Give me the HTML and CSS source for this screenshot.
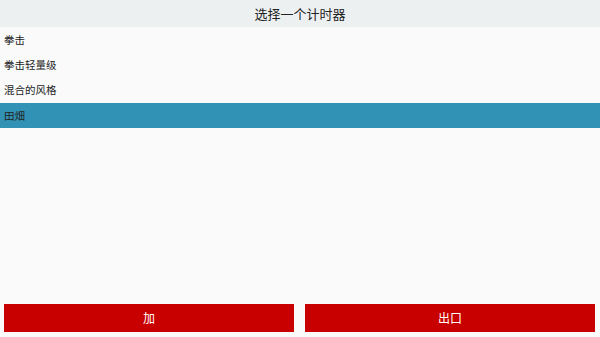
FILE: index.html
```html
<!DOCTYPE html>
<html>
<head lang="zh">
    <meta charset="UTF-8">
    <title>选择一个计时器</title>
    <link rel="stylesheet" href="styles.css">
</head>
<body>
<div class="page">
    <div class="header">选择一个计时器</div>
    <ul class="list">
        <li>拳击</li>
        <li>拳击轻量级</li>
        <li>混合的风格</li>
        <li class="bg">田畑</li>
    </ul>
    <div class="btns">
        <a href="javascript:;" class="btn">加</a>
        <a href="javascript:;" class="btn">出口</a>
    </div>
</div>
</body>
</html>
```

FILE: styles.css
```css
body, div, ul, li, a {
    margin: 0;
    padding: 0;
}

ul, li {
    list-style: none;
}

body {
    background: #fafafa;
    font-family: "Noto Sans CJK SC", "Noto Sans", sans-serif;
    color: #222;
}

a {
    display: block;
    text-decoration: none;
}

.page {
    display: flex;
    flex-direction: column;
    width: 600px;
    height: 337px;
}

.header {
    height: 27px;
    line-height: 27px;
    text-align: center;
    font-size: 13px;
    color: #222;
    background: #edf0f1;
}

.list {
    flex: 1;
}

.list li {
    height: 25px;
    line-height: 26px;
    padding-left: 4px;
    font-size: 10.5px;
}

.list li.bg {
    margin-top: 1px;
    background: #3192b5;
}

.btns {
    display: flex;
    gap: 11px;
    padding: 0 5px 5px 4px;
}

.btn {
    flex: 1;
    height: 28px;
    line-height: 28px;
    text-align: center;
    font-size: 12px;
    color: #fff;
    background: #c90000;
}
```
